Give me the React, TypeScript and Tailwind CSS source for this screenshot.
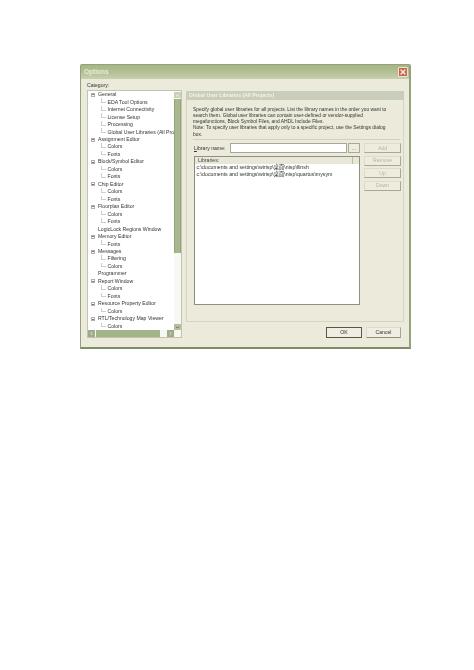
import { ChevronDown, ChevronLeft, ChevronRight, ChevronUp, X } from 'lucide-react';

const treeRows: { label: string; level: 0 | 1; parent?: boolean }[] = [
  { label: 'General', level: 0, parent: true },
  { label: 'EDA Tool Options', level: 1 },
  { label: 'Internet Connectivity', level: 1 },
  { label: 'License Setup', level: 1 },
  { label: 'Processing', level: 1 },
  { label: 'Global User Libraries (All Proje', level: 1 },
  { label: 'Assignment Editor', level: 0, parent: true },
  { label: 'Colors', level: 1 },
  { label: 'Fonts', level: 1 },
  { label: 'Block/Symbol Editor', level: 0, parent: true },
  { label: 'Colors', level: 1 },
  { label: 'Fonts', level: 1 },
  { label: 'Chip Editor', level: 0, parent: true },
  { label: 'Colors', level: 1 },
  { label: 'Fonts', level: 1 },
  { label: 'Floorplan Editor', level: 0, parent: true },
  { label: 'Colors', level: 1 },
  { label: 'Fonts', level: 1 },
  { label: 'LogicLock Regions Window', level: 0 },
  { label: 'Memory Editor', level: 0, parent: true },
  { label: 'Fonts', level: 1 },
  { label: 'Messages', level: 0, parent: true },
  { label: 'Filtering', level: 1 },
  { label: 'Colors', level: 1 },
  { label: 'Programmer', level: 0 },
  { label: 'Report Window', level: 0, parent: true },
  { label: 'Colors', level: 1 },
  { label: 'Fonts', level: 1 },
  { label: 'Resource Property Editor', level: 0, parent: true },
  { label: 'Colors', level: 1 },
  { label: 'RTL/Technology Map Viewer', level: 0, parent: true },
  { label: 'Colors', level: 1 },
];

function TreeRow({ label, level, parent }: { label: string; level: 0 | 1; parent?: boolean }) {
  return (
    <div className="relative h-[7.47px] flex items-center whitespace-nowrap text-[5.15px] leading-none text-[#33332f]">
      {parent && (
        <span className="absolute left-[3px] top-[1.7px] w-[4px] h-[4px] border-[0.5px] border-[#b0b0a6] flex items-center justify-center">
          <span className="w-[2px] h-[0.5px] bg-[#777]" />
        </span>
      )}
      {level === 1 && (
        <>
          <span className="absolute left-[12.5px] top-0 w-[0.5px] h-[4px] bg-[#cfcfc8]" />
          <span className="absolute left-[12.5px] top-[3.7px] w-[5px] h-[0.5px] bg-[#cfcfc8]" />
        </>
      )}
      <span className={level === 1 ? 'ml-[19.5px]' : 'ml-[10px]'}>{label}</span>
    </div>
  );
}

function SideButton({ label }: { label: string }) {
  return (
    <div className="w-[37px] h-[10px] flex items-center justify-center text-[5.15px] text-[#b5b4a3] border-[0.5px] border-[#dddbcc] border-r-[#a9a894] border-b-[#a9a894] bg-[#eeecdf]">
      {label}
    </div>
  );
}

export default function App() {
  return (
    <div className="w-[474px] h-[670px] bg-white pl-[80px] pt-[64px] overflow-hidden font-['Liberation_Sans',Arial,sans-serif] blur-[0.3px]">
      <div className="w-[331px] h-[285px] flex flex-col bg-[#ebeadb] border border-[#93a379] border-b-2 border-r-2 border-b-[#7f8c68] rounded-t-[2px]">
        {/* Title bar */}
        <div className="h-[14px] shrink-0 flex items-center justify-between pl-[3px] pr-[1px] bg-gradient-to-b from-[#a7b586] via-[#b3bf94] to-[#c7d0ad]">
          <span className="text-[6.5px] font-bold text-[#e9ecd9]">Options</span>
          <span className="w-[10px] h-[10px] rounded-[1px] bg-[#c9654a] border-[0.5px] border-[#f0e3d6] flex items-center justify-center">
            <X className="w-[8px] h-[8px] text-[#f6ece4]" strokeWidth={4} />
          </span>
        </div>

        <div className="flex-1 flex flex-col pl-[6px] pt-[2px] min-h-0">
          <div className="text-[5.15px] leading-[9px] text-[#333] h-[9px]">Category:</div>
          <div className="flex gap-[4px]">
            {/* Tree panel */}
            <div className="w-[95px] h-[248px] shrink-0 flex flex-col bg-white border-[0.5px] border-[#c4c3b2]">
              <div className="flex-1 flex min-h-0">
                <div className="flex-1 min-w-0 overflow-hidden">
                  {treeRows.map((row, i) => (
                    <TreeRow key={i} label={row.label} level={row.level} parent={row.parent} />
                  ))}
                </div>
                <div className="w-[7px] shrink-0 flex flex-col bg-[#f8f8f2] pt-[1px]">
                  <div className="h-[6px] flex items-center justify-center bg-[#c9d1b6]">
                    <ChevronUp className="w-[5px] h-[5px] text-white" strokeWidth={4} />
                  </div>
                  <div className="mt-[1px] h-[154px] bg-[#a8b88e] border-x-[0.5px] border-[#94a57b]" />
                  <div className="flex-1" />
                  <div className="h-[6px] flex items-center justify-center bg-[#b7bfa3]">
                    <ChevronDown className="w-[5px] h-[5px] text-[#4d5540]" strokeWidth={4} />
                  </div>
                </div>
              </div>
              <div className="h-[7px] shrink-0 flex bg-[#f8f8f2]">
                <div className="w-[7px] flex items-center justify-center bg-[#9dab88]">
                  <ChevronLeft className="w-[5px] h-[5px] text-[#edf0e2]" strokeWidth={4} />
                </div>
                <div className="ml-[1px] w-[64px] bg-[#a3b38a]" />
                <div className="w-[7px]" />
                <div className="w-[7px] flex items-center justify-center bg-[#9dab88]">
                  <ChevronRight className="w-[5px] h-[5px] text-[#edf0e2]" strokeWidth={4} />
                </div>
              </div>
            </div>

            {/* Right panel */}
            <div className="w-[218px] flex flex-col pt-[1px]">
              <div className="h-[9px] shrink-0 flex items-center pl-[3px] bg-[#c9cdb9] text-[5.15px] font-bold text-[#f4f4ec]">
                Global User Libraries (All Projects)
              </div>
              <div className="h-[222px] shrink-0 flex flex-col border-[0.5px] border-t-0 border-[#d6d5c4] pl-[6px] pr-[3px] pt-[6.5px]">
                <p className="text-[4.9px] leading-[6.3px] text-[#33332f] whitespace-nowrap">
                  Specify global user libraries for all projects. List the library names in the order you want to
                  <br />
                  search them. Global user libraries can contain user-defined or vendor-supplied
                  <br />
                  megafunctions, Block Symbol Files, and AHDL Include Files.
                  <br />
                  Note: To specify user libraries that apply only to a specific project, use the Settings dialog
                  <br />
                  box.
                </p>
                <div className="mt-[1px] h-[0.5px] bg-[#d2d1c0]" />
                <div className="mt-[4px] ml-[1px] flex gap-[4px]">
                  <div className="w-[166px] shrink-0 flex flex-col">
                    <div className="h-[10px] flex items-center">
                      <span className="w-[36px] shrink-0 text-[5.15px] text-[#333] whitespace-nowrap">
                        <span className="underline">L</span>ibrary name:
                      </span>
                      <div className="w-[117px] h-[10px] bg-white border-[0.5px] border-[#a9a894]" />
                      <div className="ml-[1px] w-[12px] h-[10px] flex items-center justify-center text-[5.15px] leading-none text-[#555] bg-[#eeecdf] border-[0.5px] border-[#a9a894]">
                        ...
                      </div>
                    </div>
                    <div className="mt-[3px] h-[149px] flex flex-col bg-white border-[0.5px] border-[#8f8f82] border-l border-l-[#8a8a7c]">
                      <div className="h-[6.5px] shrink-0 flex items-center bg-[#e8e7d8] text-[5.15px] text-[#444] pl-[3px]">
                        <span className="flex-1">Libraries:</span>
                        <span className="w-[7px] h-full border-l-[0.5px] border-[#bdbcac]" />
                      </div>
                      <div className="pl-[1.5px] text-[5.25px] leading-[7px] text-[#33332f] font-['Liberation_Sans','Noto_Sans_CJK_SC',sans-serif] whitespace-nowrap">
                        <div>c:\documents and settings\wirisp\桌面\nisp\llinsh</div>
                        <div>c:\documents and settings\wirisp\桌面\nisp\quartus\mysym</div>
                      </div>
                    </div>
                  </div>
                  <div className="flex flex-col gap-[2.5px]">
                    <SideButton label="Add" />
                    <SideButton label="Remove" />
                    <SideButton label="Up" />
                    <SideButton label="Down" />
                  </div>
                </div>
              </div>
              <div className="mt-[5px] pr-[3px] flex justify-end gap-[4px]">
                <div className="w-[36px] h-[11px] flex items-center justify-center text-[5.15px] text-[#333] bg-[#f0eee2] border border-[#55584a]">
                  OK
                </div>
                <div className="w-[35px] h-[11px] flex items-center justify-center text-[5.15px] text-[#333] bg-[#f0eee2] border-[0.5px] border-[#dddbcc] border-r-[#a9a894] border-b-[#8f8e7c]">
                  Cancel
                </div>
              </div>
            </div>
          </div>
        </div>
      </div>
    </div>
  );
}
